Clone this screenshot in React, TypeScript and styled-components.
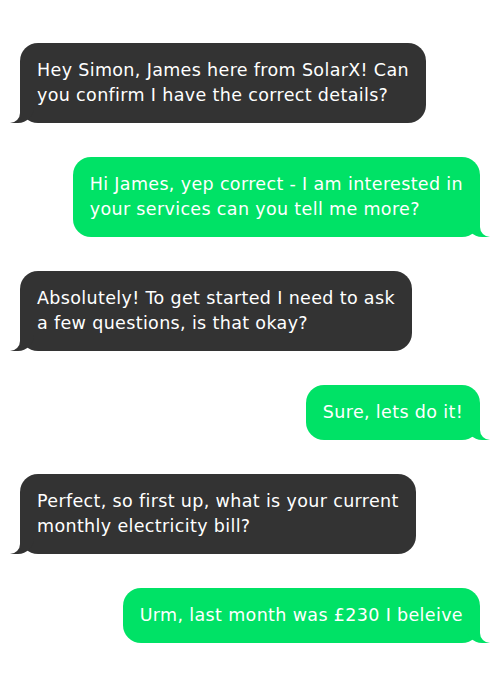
import React from "react";
import styled, { createGlobalStyle, css } from "styled-components";

const GlobalStyle = createGlobalStyle`
  html, body {
    margin: 0;
    padding: 0;
    background: #ffffff;
  }
  body {
    font-family: "DejaVu Sans", "Noto Sans", sans-serif;
  }
`;

const Thread = styled.div`
  width: 500px;
  height: 682px;
  box-sizing: border-box;
  padding: 43px 20px 0 20px;
  display: flex;
  flex-direction: column;
  gap: 34px;
  background: #ffffff;
`;

type Side = "them" | "me";

const Bubble = styled.div<{ $side: Side }>`
  position: relative;
  box-sizing: border-box;
  width: fit-content;
  padding: 15px 17px;
  border-radius: 18px;
  font-size: 17.5px;
  letter-spacing: 0.35px;
  line-height: 25px;
  color: #ffffff;
  white-space: nowrap;

  &::before,
  &::after {
    content: "";
    position: absolute;
    bottom: 0;
    height: 20px;
  }

  ${({ $side }) =>
    $side === "them"
      ? css`
          align-self: flex-start;
          background: #333333;
          &::before {
            left: -10px;
            width: 24px;
            background: #333333;
            border-bottom-right-radius: 16px;
          }
          &::after {
            left: -12px;
            width: 12px;
            background: #ffffff;
            border-bottom-right-radius: 10px;
          }
        `
      : css`
          align-self: flex-end;
          background: #00e266;
          &::before {
            right: -10px;
            width: 24px;
            background: #00e266;
            border-bottom-left-radius: 16px;
          }
          &::after {
            right: -12px;
            width: 12px;
            background: #ffffff;
            border-bottom-left-radius: 10px;
          }
        `}
`;

const messages: { side: Side; lines: string[] }[] = [
  {
    side: "them",
    lines: ["Hey Simon, James here from SolarX! Can", "you confirm I have the correct details?"],
  },
  {
    side: "me",
    lines: ["Hi James, yep correct - I am interested in", "your services can you tell me more?"],
  },
  {
    side: "them",
    lines: ["Absolutely! To get started I need to ask", "a few questions, is that okay?"],
  },
  { side: "me", lines: ["Sure, lets do it!"] },
  {
    side: "them",
    lines: ["Perfect, so first up, what is your current", "monthly electricity bill?"],
  },
  { side: "me", lines: ["Urm, last month was £230 I beleive"] },
];

export default function App() {
  return (
    <>
      <GlobalStyle />
      <Thread>
        {messages.map((m, i) => (
          <Bubble key={i} $side={m.side}>
            {m.lines.map((l, j) => (
              <React.Fragment key={j}>
                {j > 0 && <br />}
                {l}
              </React.Fragment>
            ))}
          </Bubble>
        ))}
      </Thread>
    </>
  );
}
